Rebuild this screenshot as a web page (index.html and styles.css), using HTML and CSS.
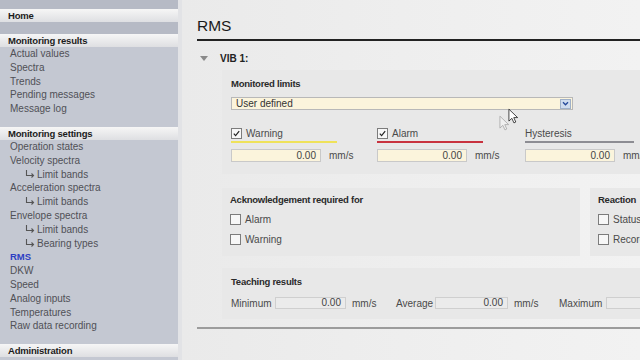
FILE: index.html
```html
<!DOCTYPE html>
<html lang="en">
<head>
  <meta charset="UTF-8" />
  <title>RMS</title>
  <link rel="stylesheet" href="styles.css">
</head>
<body>
  <nav class="sidebar">
    <div class="nav-band nav-band-top"></div>
    <div class="nav-head">Home</div>
    <div class="nav-band"></div>
    <div class="nav-head">Monitoring results</div>
    <ul class="nav-list">
      <li>Actual values</li>
      <li>Spectra</li>
      <li>Trends</li>
      <li>Pending messages</li>
      <li>Message log</li>
    </ul>
    <div class="nav-head">Monitoring settings</div>
    <ul class="nav-list">
      <li>Operation states</li>
      <li>Velocity spectra</li>
      <li class="sub"><svg class="sub-arrow" viewBox="0 0 10 8"><path d="M1.5 0v5.5h7M6.5 3.5l2 2-2 2" fill="none" stroke="#555" stroke-width="1.1"/></svg>Limit bands</li>
      <li>Acceleration spectra</li>
      <li class="sub"><svg class="sub-arrow" viewBox="0 0 10 8"><path d="M1.5 0v5.5h7M6.5 3.5l2 2-2 2" fill="none" stroke="#555" stroke-width="1.1"/></svg>Limit bands</li>
      <li>Envelope spectra</li>
      <li class="sub"><svg class="sub-arrow" viewBox="0 0 10 8"><path d="M1.5 0v5.5h7M6.5 3.5l2 2-2 2" fill="none" stroke="#555" stroke-width="1.1"/></svg>Limit bands</li>
      <li class="sub"><svg class="sub-arrow" viewBox="0 0 10 8"><path d="M1.5 0v5.5h7M6.5 3.5l2 2-2 2" fill="none" stroke="#555" stroke-width="1.1"/></svg>Bearing types</li>
      <li class="active">RMS</li>
      <li>DKW</li>
      <li>Speed</li>
      <li>Analog inputs</li>
      <li>Temperatures</li>
      <li>Raw data recording</li>
    </ul>
    <div class="nav-head nav-head-last">Administration</div>
  </nav>

  <main class="content">
    <h1 class="page-title">RMS</h1>

    <div class="section-head">
      <span class="toggle"></span>
      <span>VIB 1:</span>
    </div>

    <div class="panel limits">
      <div class="panel-title">Monitored limits</div>
      <div class="select">
        <span>User defined</span>
        <span class="select-btn"><svg viewBox="0 0 8 6"><path d="M1 1.5l3 3 3-3" fill="none" stroke="#24489a" stroke-width="1.6"/></svg></span>
      </div>

      <div class="limit-grid">
        <div class="limit">
          <div class="check-row"><span class="box checked"><svg viewBox="0 0 10 10"><path d="M2 5.2l2 2.2 4-5" fill="none" stroke="#222" stroke-width="1.3"/></svg></span>Warning</div>
          <div class="underline warn"></div>
          <div class="field-row"><span class="field">0.00</span><span class="unit">mm/s</span></div>
        </div>
        <div class="limit">
          <div class="check-row"><span class="box checked"><svg viewBox="0 0 10 10"><path d="M2 5.2l2 2.2 4-5" fill="none" stroke="#222" stroke-width="1.3"/></svg></span>Alarm</div>
          <div class="underline alarm"></div>
          <div class="field-row"><span class="field">0.00</span><span class="unit">mm/s</span></div>
        </div>
        <div class="limit">
          <div class="check-row">Hysteresis</div>
          <div class="underline hyst"></div>
          <div class="field-row"><span class="field">0.00</span><span class="unit">mm/s</span></div>
        </div>
      </div>
    </div>

    <div class="panel-pair">
      <div class="panel ack">
        <div class="panel-title">Acknowledgement required for</div>
        <div class="option"><span class="box"></span>Alarm</div>
        <div class="option"><span class="box"></span>Warning</div>
      </div>
      <div class="panel reaction">
        <div class="panel-title">Reaction</div>
        <div class="option"><span class="box"></span>Status</div>
        <div class="option"><span class="box"></span>Recording</div>
      </div>
    </div>

    <div class="panel teaching">
      <div class="panel-title">Teaching results</div>
      <div class="teach-row">
        <span>Minimum</span><span class="field small">0.00</span><span class="unit">mm/s</span>
        <span>Average</span><span class="field small">0.00</span><span class="unit">mm/s</span>
        <span>Maximum</span><span class="field small">0.00</span><span class="unit">mm/s</span>
      </div>
    </div>

    <div class="end-rule"></div>

    <svg class="cursor ghost" viewBox="0 0 12 18"><path d="M1 1v13l3.2-3 2.3 5 2-1-2.2-4.8H10.5z" fill="#fff" stroke="#333" stroke-width="0.9"/></svg>
    <svg class="cursor" viewBox="0 0 12 18"><path d="M1 1v13l3.2-3 2.3 5 2-1-2.2-4.8H10.5z" fill="#fff" stroke="#222" stroke-width="0.9"/></svg>
  </main>
</body>
</html>
```

FILE: styles.css
```css
body {
  margin: 0;
  padding: 0;
  width: 640px;
  height: 360px;
  overflow: hidden;
  display: flex;
  font-family: "Liberation Sans", Arial, sans-serif;
  font-size: 10px;
  color: #444;
  background-color: #ececec;
}

/* left navigation */

.sidebar {
  width: 178px;
  flex: none;
  background-color: #c4c8d2;
  border-right: 4px solid #e2e3e6;
}

.nav-band {
  height: 12px;
  background-color: #b6bac5;
}

.nav-band-top {
  height: 9px;
}

.nav-head {
  height: 13px;
  line-height: 13px;
  padding-left: 8px;
  background: linear-gradient(#f6f6f6, #dedfe2);
  color: #1c1c1c;
  font-weight: bold;
  font-size: 9.5px;
  letter-spacing: -0.2px;
}

.nav-head-last {
  margin-top: 10px;
}

.nav-list {
  list-style: none;
  margin: 0 0 11px;
  padding: 0 0 0 10px;
}

.nav-list li {
  height: 13.8px;
  line-height: 13.8px;
  color: #505056;
  white-space: nowrap;
}

.nav-list li.sub {
  padding-left: 15px;
}

.sub-arrow {
  width: 10px;
  height: 8px;
  margin-right: 2px;
  vertical-align: 0;
}

.nav-list li.active {
  color: #2d3fc4;
  font-weight: bold;
  font-size: 9.5px;
}

/* main area */

.content {
  position: relative;
  flex: 1;
  padding-left: 15px;
  background: linear-gradient(90deg, #eaeaea, #efefef 60%, #f2f2f2);
  overflow: hidden;
}

.page-title {
  margin: 16px 0 0;
  height: 20px;
  line-height: 20px;
  padding-bottom: 3px;
  border-bottom: 2px solid #222;
  font-size: 15.5px;
  font-weight: normal;
  color: #1a1a1a;
}

.section-head {
  display: flex;
  align-items: center;
  gap: 12px;
  margin-top: 10px;
  height: 14px;
  padding-left: 3px;
  font-weight: bold;
  font-size: 10px;
  color: #222;
}

.toggle {
  width: 0;
  height: 0;
  border-left: 4px solid transparent;
  border-right: 4px solid transparent;
  border-top: 5px solid #8a8a8a;
}

.panel {
  margin-left: 25px;
  padding: 8px 9px;
  background-color: #e8e8e8;
}

.panel-title {
  height: 12px;
  line-height: 12px;
  font-weight: bold;
  font-size: 9.5px;
  letter-spacing: -0.25px;
  color: #2a2a2a;
}

.limits {
  margin-top: 5px;
  padding-bottom: 12px;
}

.select {
  display: flex;
  align-items: center;
  justify-content: space-between;
  width: 335px;
  height: 11px;
  margin-top: 7px;
  padding: 0 1px 0 4px;
  border: 1px solid #b8b8b8;
  background-color: #fbf4dc;
  color: #333;
}

.select-btn {
  width: 11px;
  height: 10px;
  display: flex;
  align-items: center;
  justify-content: center;
  background-color: #cfdcee;
  border: 1px solid #9fb0c8;
  box-sizing: border-box;
}

.select-btn svg {
  width: 7px;
  height: 5px;
}

.limit-grid {
  display: grid;
  grid-template-columns: 146px 148px 150px;
  margin-top: 17px;
}

.check-row {
  display: flex;
  align-items: center;
  gap: 4px;
  height: 12px;
  color: #4a4a4a;
}

.box {
  width: 9px;
  height: 9px;
  border: 1px solid #7c7c7c;
  background-color: #f7f7f7;
  flex: none;
  display: inline-flex;
}

.box svg {
  width: 9px;
  height: 9px;
}

.underline {
  width: 106px;
  height: 2px;
  margin-top: 2px;
}

.underline.warn {
  background-color: #efe25a;
}

.underline.alarm {
  background-color: #c8323f;
}

.underline.hyst {
  width: 109px;
  background-color: #8d8d93;
}

.field-row {
  display: flex;
  align-items: center;
  margin-top: 6px;
}

.field {
  width: 82px;
  height: 11px;
  line-height: 11px;
  padding: 0 4px 0 2px;
  text-align: right;
  border: 1px solid #c9c9c9;
  background-color: #fbf4dc;
  color: #444;
}

.unit {
  margin-left: 8px;
  color: #4a4a4a;
}

.panel-pair {
  display: flex;
  gap: 10px;
  margin-top: 14px;
}

.panel-pair .panel {
  flex: none;
  margin-left: 0;
  padding: 6px 8px 7px;
}

.panel-pair .ack {
  width: 342px;
  margin-left: 25px;
}

.panel-pair .reaction {
  width: 100px;
}

.option {
  display: flex;
  align-items: center;
  gap: 4px;
  height: 20px;
  color: #4a4a4a;
  white-space: nowrap;
}

.panel-title + .option {
  margin-top: 3px;
}

.teaching {
  margin-top: 12px;
}

.teach-row {
  display: grid;
  grid-template-columns: 44px 72px 49px 39px 74px 50px 47px 80px 40px;
  align-items: center;
  height: 16px;
  margin-top: 7px;
  color: #4a4a4a;
}

.teach-row .unit {
  margin-left: 5px;
}

.field.small {
  width: auto;
  height: 10px;
  line-height: 10px;
  margin-right: 1px;
  background-color: #ebebeb;
  border-color: #cfcfcf;
}

.end-rule {
  margin-top: 8px;
  height: 2px;
  background-color: #9c9c9c;
}

/* pointer captured in the screenshot */

.cursor {
  position: absolute;
  left: 326px;
  top: 108px;
  width: 11px;
  height: 17px;
}

.cursor.ghost {
  left: 317px;
  top: 115px;
  opacity: 0.35;
}
```
